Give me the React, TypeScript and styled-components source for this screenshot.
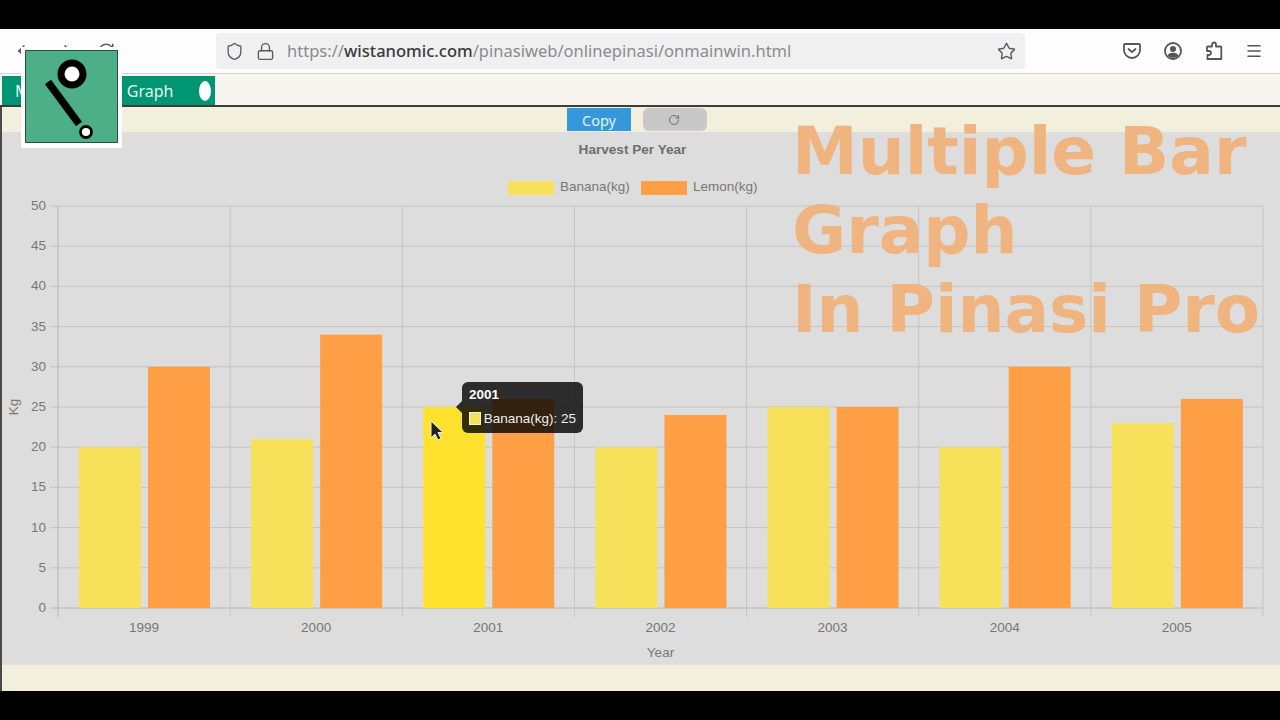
import type { FC } from "react";
import styled, { createGlobalStyle } from "styled-components";
import { ArrowLeft, ArrowRight, Lock, Menu, RotateCw, Shield, Star } from "lucide-react";

const GlobalStyle = createGlobalStyle`
  html, body {
    margin: 0;
    padding: 0;
    background: #000;
  }
  body {
    font-family: "Liberation Sans", Arial, sans-serif;
  }
`;

const Screen = styled.div`
  position: relative;
  width: 1280px;
  height: 720px;
  overflow: hidden;
  display: flex;
  flex-direction: column;
  background: #000;
`;

const BlackBar = styled.div<{ $h: number }>`
  flex: 0 0 ${(p) => p.$h}px;
  background: #000;
`;

const NavBar = styled.div`
  flex: 0 0 45px;
  box-sizing: border-box;
  display: flex;
  align-items: center;
  background: #fdfdfd;
  border-bottom: 1px solid #d4d4d6;
  color: #5b5b66;
`;

const NavButtons = styled.div`
  flex: 0 0 216px;
  box-sizing: border-box;
  display: flex;
  gap: 23px;
  padding-left: 15px;
`;

const UrlBar = styled.div`
  flex: 0 0 809px;
  height: 36px;
  box-sizing: border-box;
  display: flex;
  align-items: center;
  gap: 12px;
  padding: 0 9px;
  background: #f0f0f1;
  border-radius: 4px;
`;

const UrlText = styled.div`
  flex: 1;
  font-family: "Noto Sans", sans-serif;
  font-size: 16.55px;
  line-height: 22px;
  margin-top: -1px;
  color: #8a8a92;
  white-space: nowrap;
  b {
    font-weight: 500;
    color: #3a3a40;
  }
`;

const ToolIcons = styled.div`
  flex: 1;
  display: flex;
  justify-content: flex-end;
  align-items: center;
  gap: 21px;
  padding-right: 17px;
  color: #55555e;
`;

const TabStrip = styled.div`
  flex: 0 0 33px;
  box-sizing: border-box;
  display: flex;
  align-items: flex-end;
  padding: 2px 0 0 2px;
  background: #f8f5ee;
  border-bottom: 2px solid #3c3c3c;
`;

const Tab = styled.div`
  width: 213px;
  height: 29px;
  box-sizing: border-box;
  display: flex;
  align-items: center;
  justify-content: space-between;
  padding: 0 4px 0 13px;
  background: #009673;
  color: #e4f5ef;
  font-family: "Noto Sans", sans-serif;
  font-size: 16px;
  word-spacing: 8px;
`;

const TabOval = styled.span`
  width: 12px;
  height: 20px;
  border-radius: 50%;
  background: #fff;
`;

const Page = styled.div`
  flex: 1;
  display: flex;
  flex-direction: column;
  border-left: 2px solid #4a4a4a;
  background: #f2efdc;
`;

const ButtonRow = styled.div`
  flex: 0 0 25px;
  box-sizing: border-box;
  display: flex;
  justify-content: center;
  gap: 12px;
  padding: 1px 8px 1px 0;
`;

const CopyButton = styled.button`
  width: 64px;
  border: 0;
  padding: 0;
  background: #3498db;
  color: #e6f2fb;
  font-family: "Noto Sans", sans-serif;
  font-size: 14.5px;
`;

const ReloadButton = styled.button`
  width: 64px;
  border: 0;
  padding: 0 2px 0 0;
  display: flex;
  align-items: center;
  justify-content: center;
  background: #c8c8c8;
  color: #6e6e6e;
  border-radius: 6px;
`;

const ChartPanel = styled.div`
  position: relative;
  flex: 0 0 533px;
  background: #dddddd;
  svg {
    display: block;
  }
`;

const Tooltip = styled.div`
  position: absolute;
  left: 460px;
  top: 250px;
  width: 121px;
  height: 51px;
  box-sizing: border-box;
  padding: 5px 7px;
  background: rgba(0, 0, 0, 0.8);
  border-radius: 6px;
  color: #fff;
  font-size: 13.5px;
  &::before {
    content: "";
    position: absolute;
    left: -6px;
    top: 19px;
    border: 6px solid transparent;
    border-left: 0;
    border-right-color: rgba(0, 0, 0, 0.8);
  }
`;

const TooltipTitle = styled.div`
  font-weight: 700;
  line-height: 15px;
  margin-bottom: 9px;
`;

const TooltipRow = styled.div`
  display: flex;
  align-items: center;
  gap: 3px;
  line-height: 15px;
  color: #eee;
  white-space: nowrap;
`;

const TooltipSwatch = styled.span`
  width: 13px;
  height: 13px;
  background: #f7e15a;
  border: 1px solid #eee;
  box-sizing: border-box;
`;

const Cursor = styled.svg`
  position: absolute;
  left: 428px;
  top: 288px;
`;

const LogoFrame = styled.div`
  position: absolute;
  left: 21px;
  top: 47px;
  width: 101px;
  height: 101px;
  box-sizing: border-box;
  padding: 3px 4px 5px;
  background: #fff;
`;

const LogoBox = styled.div`
  height: 100%;
  box-sizing: border-box;
  background: #4caf87;
  border: 1px solid #2c4f42;
`;

const Overlay = styled.div`
  position: absolute;
  left: 792px;
  top: 112px;
  font-family: "DejaVu Sans", sans-serif;
  font-weight: 700;
  font-size: 66px;
  line-height: 79px;
  color: #efb47f;
  white-space: nowrap;
`;

const years = [1999, 2000, 2001, 2002, 2003, 2004, 2005];
const banana = [20, 21, 25, 20, 25, 20, 23];
const lemon = [30, 34, 26, 24, 25, 30, 26];

const X0 = 58;
const Y0 = 608;
const STEP_X = 172.14;
const UNIT_Y = 8.04;
const GRID = "#c4c4c4";
const LABEL = "#777";

const Chart: FC = () => (
  <svg width="1278" height="533" viewBox="2 132 1278 533" fontFamily="'Liberation Sans', Arial, sans-serif">
    <text x="632.500" y="154" textAnchor="middle" fontSize="13.600" fontWeight="700" fill="#6e6e6e">
      Harvest Per Year
    </text>
    <rect x="508" y="181" width="46" height="14" fill="#f7e15a" />
    <text x="560" y="191" fontSize="13.500" fill={LABEL}>Banana(kg)</text>
    <rect x="641" y="181" width="46" height="14" fill="#ff9f45" />
    <text x="693" y="191" fontSize="13.500" fill={LABEL}>Lemon(kg)</text>

    {Array.from({ length: 11 }, (_, i) => {
      const y = Y0 - i * 5 * UNIT_Y;
      return (
        <g key={i}>
          <line x1="50" x2="1263" y1={y} y2={y} stroke={i === 0 ? "#b4b4b4" : GRID} />
          <text x="46" y={y + 4} textAnchor="end" fontSize="13.500" fill={LABEL}>{i * 5}</text>
        </g>
      );
    })}
    {Array.from({ length: 8 }, (_, i) => {
      const x = X0 + i * STEP_X;
      return <line key={i} x1={x} x2={x} y1="206" y2="617" stroke={i === 0 ? "#b4b4b4" : GRID} />;
    })}

    {years.map((year, i) => {
      const x = X0 + i * STEP_X;
      return (
        <g key={year}>
          <rect
            x={x + 21}
            y={Y0 - banana[i] * UNIT_Y}
            width="62"
            height={banana[i] * UNIT_Y}
            fill={year === 2001 ? "#ffe22e" : "#f7e15a"}
          />
          <rect x={x + 90} y={Y0 - lemon[i] * UNIT_Y} width="62" height={lemon[i] * UNIT_Y} fill="#ff9f45" />
          <text x={x + 86} y="632" textAnchor="middle" fontSize="13.500" fill={LABEL}>{year}</text>
        </g>
      );
    })}

    <text x="660.500" y="657" textAnchor="middle" fontSize="13.500" fill={LABEL}>Year</text>
    <text transform="translate(18 407) rotate(-90)" textAnchor="middle" fontSize="13.500" fill={LABEL}>Kg</text>
  </svg>
);

const PocketIcon: FC = () => (
  <svg width="20" height="20" viewBox="0 0 20 20" fill="none" stroke="currentColor" strokeWidth="1.8">
    <path d="M3 3h14a1 1 0 0 1 1 1v5a8 8 0 0 1-16 0V4a1 1 0 0 1 1-1z" />
    <path d="M6.500 8l3.500 3.200L13.500 8" strokeLinecap="round" strokeLinejoin="round" />
  </svg>
);

const AccountIcon: FC = () => (
  <svg width="20" height="20" viewBox="0 0 20 20" fill="none">
    <circle cx="10" cy="10" r="8" stroke="currentColor" strokeWidth="1.8" />
    <circle cx="10" cy="8" r="3" fill="currentColor" />
    <path d="M4.500 14.500c1-2 3-2.700 5.500-2.700s4.500.7 5.500 2.700c-1.500 1.500-3.300 2.300-5.500 2.300s-4-.8-5.500-2.300z" fill="currentColor" />
  </svg>
);

const PuzzleIcon: FC = () => (
  <svg width="20" height="20" viewBox="0 0 20 20" fill="none" stroke="currentColor" strokeWidth="1.8" strokeLinejoin="round">
    <path d="M8 5.500V3.500a2 2 0 0 1 4 0v2h4.500a.8.8 0 0 1 .8.8V18H3.500v-4H5a2 2 0 0 0 0-4H3v-3.700a.8.8 0 0 1 .8-.8z" />
  </svg>
);

const Logo: FC = () => (
  <svg width="91" height="91" viewBox="0 0 91 91">
    <circle cx="46" cy="23" r="11" fill="#fff" stroke="#000" strokeWidth="7" />
    <line x1="22" y1="31" x2="53" y2="73" stroke="#000" strokeWidth="7.500" />
    <circle cx="60" cy="81" r="5.500" fill="#fff" stroke="#000" strokeWidth="2.800" />
  </svg>
);

const App: FC = () => {
  return (
    <Screen>
      <GlobalStyle />
      <BlackBar $h={29} />
      <NavBar>
        <NavButtons>
          <ArrowLeft size={18} />
          <ArrowRight size={18} />
          <RotateCw size={18} />
        </NavButtons>
        <UrlBar>
          <Shield size={19} strokeWidth={1.7} />
          <Lock size={19} strokeWidth={1.7} />
          <UrlText>
            https://<b>wistanomic.com</b>/pinasiweb/onlinepinasi/onmainwin.html
          </UrlText>
          <Star size={19} strokeWidth={1.8} />
        </UrlBar>
        <ToolIcons>
          <PocketIcon />
          <AccountIcon />
          <PuzzleIcon />
          <Menu size={18} />
        </ToolIcons>
      </NavBar>
      <TabStrip>
        <Tab>
          Multiple Bar Graph
          <TabOval />
        </Tab>
      </TabStrip>
      <Page>
        <ButtonRow>
          <CopyButton>Copy</CopyButton>
          <ReloadButton>
            <RotateCw size={12} strokeWidth={2} />
          </ReloadButton>
        </ButtonRow>
        <ChartPanel>
          <Chart />
          <Tooltip>
            <TooltipTitle>2001</TooltipTitle>
            <TooltipRow>
              <TooltipSwatch />
              Banana(kg): 25
            </TooltipRow>
          </Tooltip>
          <Cursor width="14" height="22" viewBox="0 0 14 22">
            <path d="M1 1v17l4-4 3 6 3-1.500-3-6h5z" fill="#222" stroke="#eee" strokeWidth="1" />
          </Cursor>
        </ChartPanel>
      </Page>
      <LogoFrame>
        <LogoBox>
          <Logo />
        </LogoBox>
      </LogoFrame>
      <Overlay>
        Multiple Bar
        <br />
        Graph
        <br />
        In Pinasi Pro
      </Overlay>
      <BlackBar $h={29} />
    </Screen>
  );
};

export default App;
